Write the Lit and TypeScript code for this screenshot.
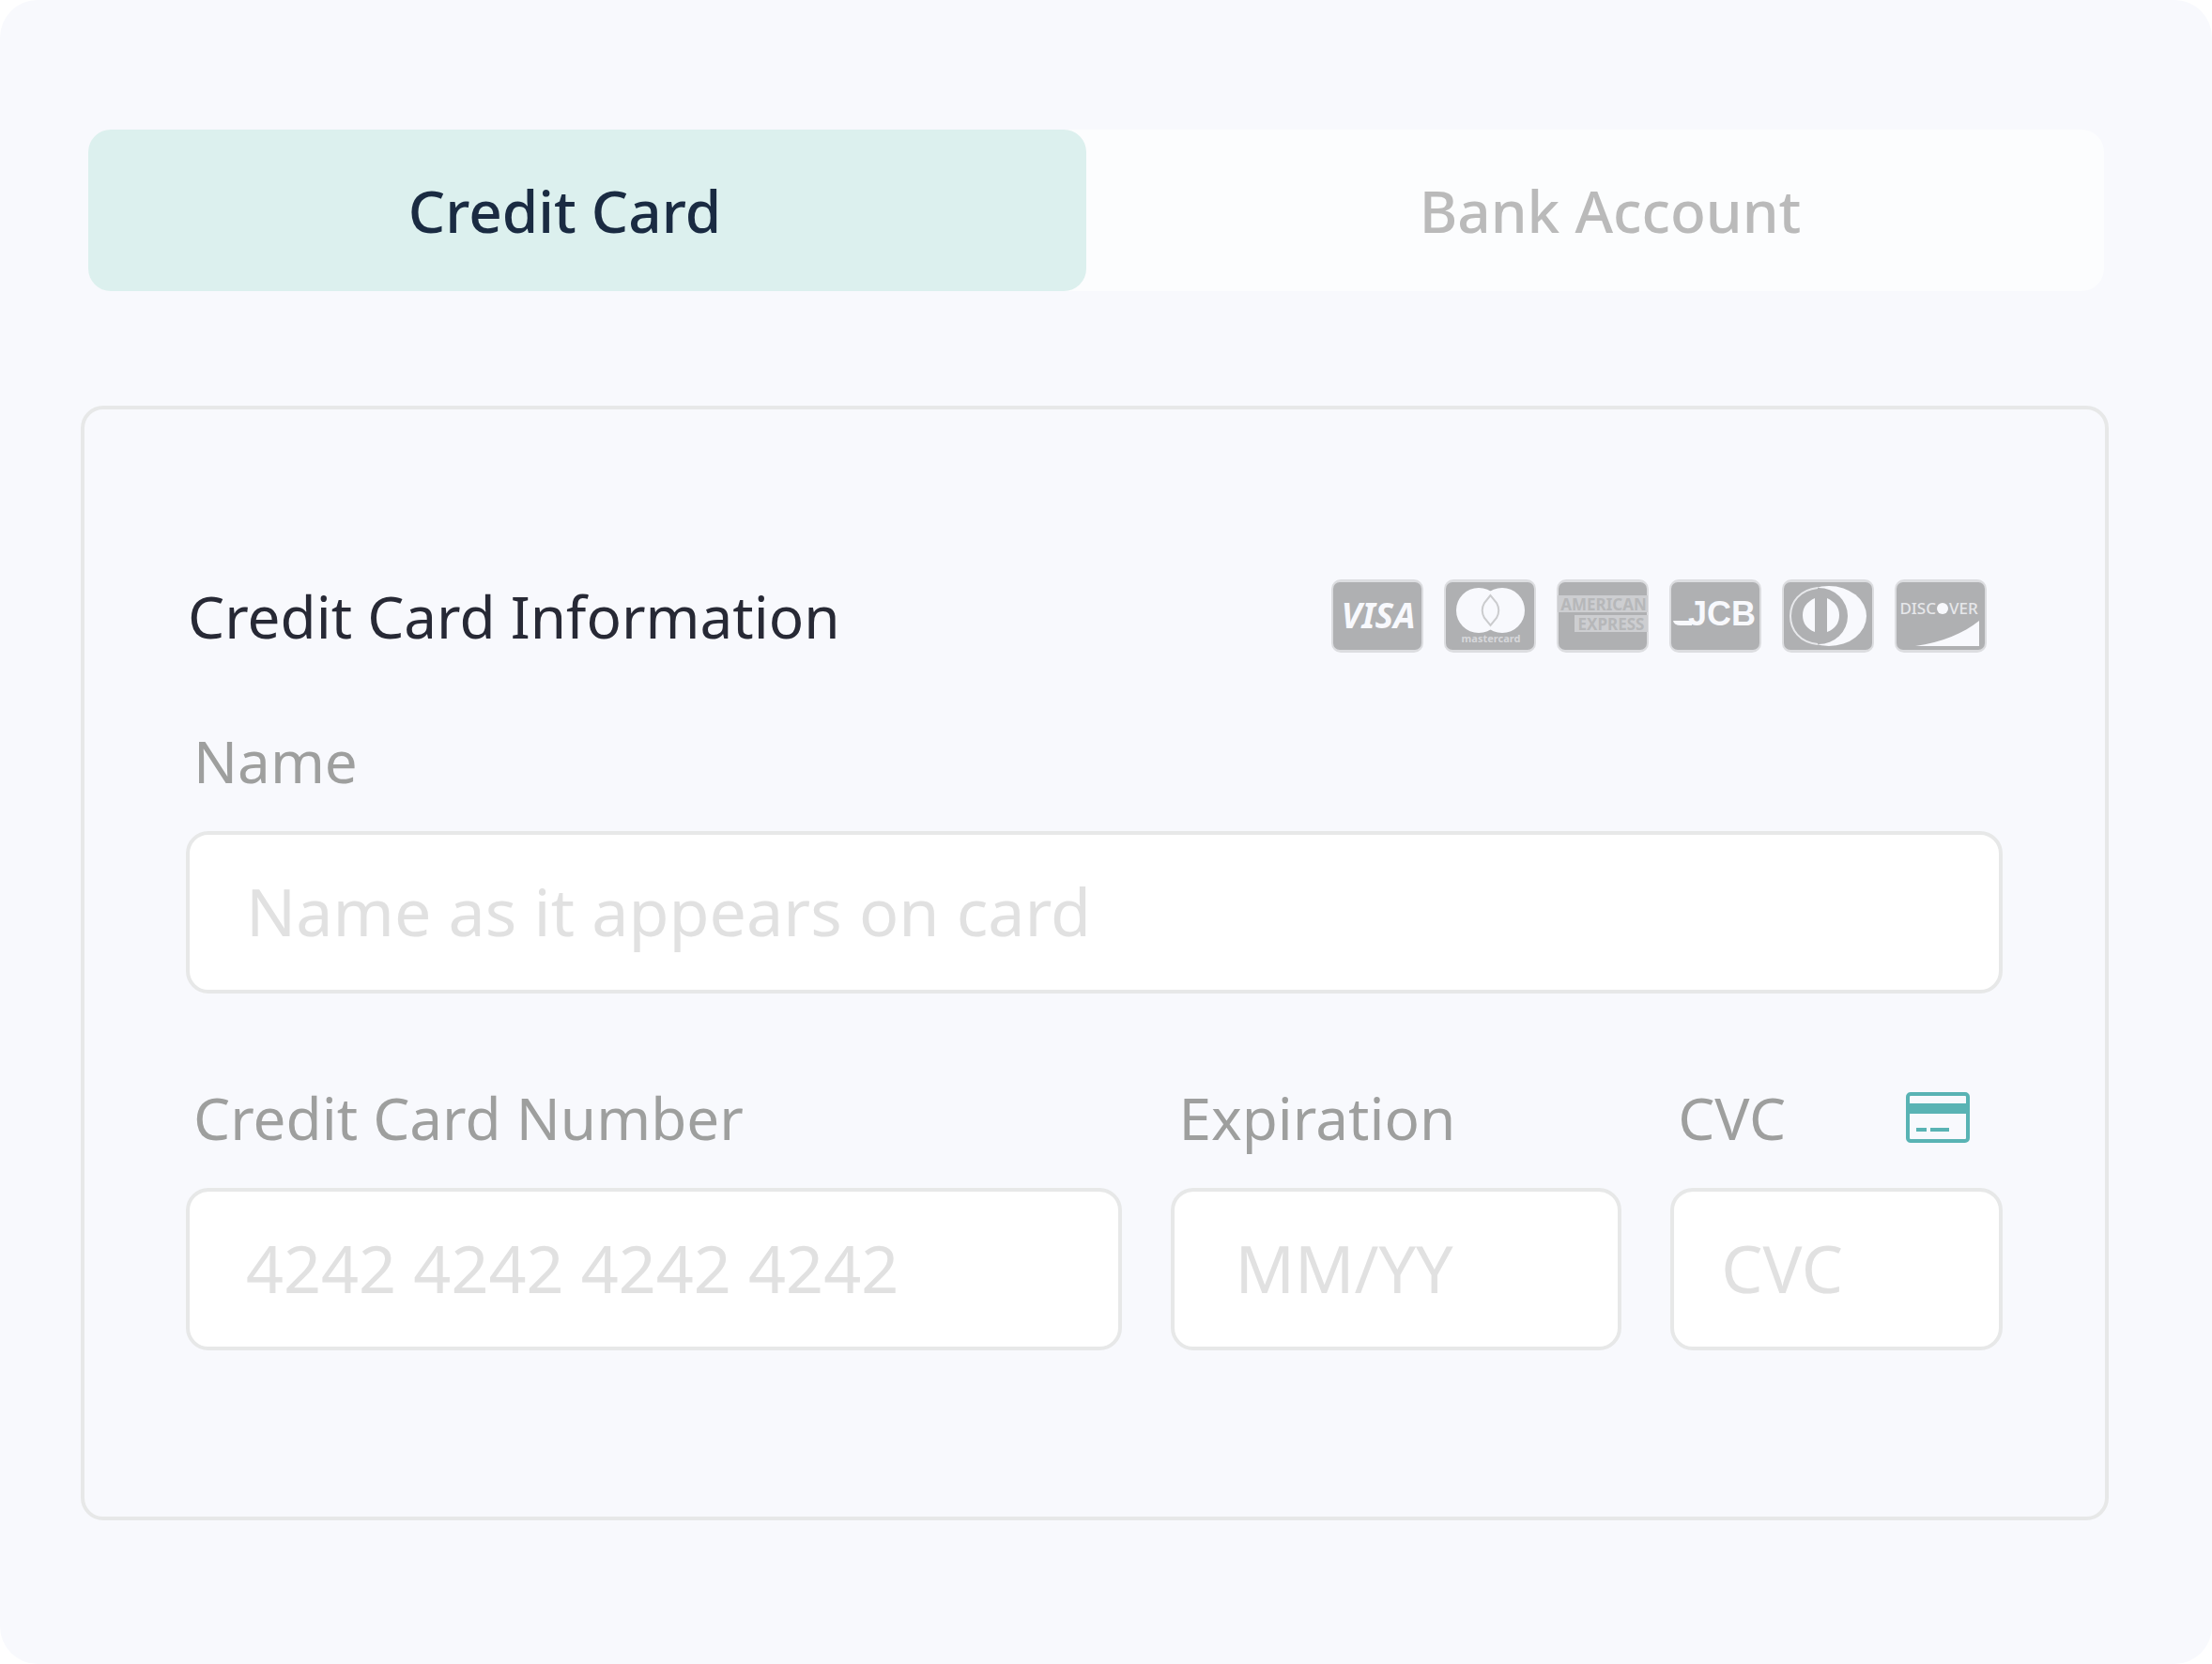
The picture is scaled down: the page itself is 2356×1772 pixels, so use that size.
import { LitElement, html, svg, css } from "lit";
import { customElement, property, state } from "lit/decorators.js";

const brandArt: Record<string, unknown> = {
  Visa: svg`<text class="visa" x="50" y="53">VISA</text>`,
  Mastercard: svg`
    <circle class="light" cx="37" cy="34" r="24" />
    <circle class="light" cx="62" cy="34" r="24" />
    <path class="rim" d="M49.500 18 L43 26 Q38.500 34 43 42 L49.500 50 L56 42 Q60.500 34 56 26Z" />
    <text class="mini" x="50" y="68">mastercard</text>`,
  "American Express": svg`
    <rect class="wash" x="1" y="18" width="96" height="18" />
    <rect class="wash" x="19" y="39" width="78" height="18" />
    <text class="amex" x="50" y="34">AMERICAN</text>
    <text class="amex" x="58" y="55">EXPRESS</text>`,
  JCB: svg`
    <text class="jcb" x="92" y="50">JCB</text>
    <path class="light" d="M4 45 H24 V50 H12 Q5 50 4 45Z" />`,
  "Diners Club": svg`
    <ellipse class="light" cx="50" cy="40" rx="40" ry="32" />
    <ellipse class="gray" cx="39" cy="40" rx="31" ry="30" />
    <path class="fine" d="M38 10 C19 12 9 25 9 40 C9 55 19 68 38 70" />
    <path class="light" d="M35 21 Q22 27 22 39 Q22 52 35 57Z M48 21 Q61 27 61 39 Q61 52 48 57Z" />`,
  Discover: svg`
    <text class="disc" x="44" y="38">DISC</text>
    <circle class="light" cx="51" cy="32" r="6" />
    <text class="ver" x="58" y="38">VER</text>
    <path class="light" d="M22 72 C50 68 74 58 90 45 V72Z" />`,
};

@customElement("card-brand")
class CardBrand extends LitElement {
  @property() name = "";

  static styles = css`
    :host { display: block; }
    .art { display: block; width: 98px; height: 80px; }
    .halo { fill: #dcdde0; }
    .gray { fill: #afb0b2; }
    .light { fill: #f8f9fd; }
    .wash { fill: #cdced1; }
    .rim { fill: none; stroke: #cbccce; stroke-width: 2; }
    .fine { fill: none; stroke: #e7e8eb; stroke-width: 2; }
    text { font-family: "Noto Sans", sans-serif; font-weight: 700; fill: #f8f9fd; }
    .visa { font-size: 37px; font-style: italic; text-anchor: middle; }
    .mini { font-size: 11px; fill: #d6d7da; text-anchor: middle; }
    .amex { font-size: 17px; fill: #b6b7b9; text-anchor: middle; }
    .jcb { font-family: "Liberation Sans", sans-serif; font-size: 36px; text-anchor: end; }
    .disc { font-size: 17px; font-weight: 500; fill: #e6e7ea; text-anchor: end; }
    .ver { font-size: 17px; font-weight: 500; fill: #e6e7ea; }
  `;

  render() {
    return html`
      <svg class="art" viewBox="0 0 98 80" role="img" aria-label=${this.name}>
        <rect class="halo" x="0" y="1" width="98" height="78" rx="10" />
        <rect class="gray" x="2" y="4" width="94" height="72" rx="7" />
        ${brandArt[this.name]}
      </svg>
    `;
  }
}

@customElement("app-root")
class AppRoot extends LitElement {
  @state() private tab = "Credit Card";

  static styles = css`
    :host {
      display: block;
      font-family: "Noto Sans", sans-serif;
    }
    * { box-sizing: border-box; }
    .page {
      display: flex;
      flex-direction: column;
      gap: 122px;
      min-height: 100vh;
      padding: 138px 110px 153px 86px;
      border-radius: 40px;
      background: #f8f9fd;
    }
    .tabs {
      display: grid;
      grid-template-columns: 1063fr 1084fr;
      margin: 0 5px 0 8px;
      border-radius: 24px;
      background: #fcfdfe;
    }
    .tab {
      height: 172px;
      border: 0;
      border-radius: 24px;
      background: none;
      color: #bababa;
      font: 500 62px/80px "Noto Sans", sans-serif;
      cursor: pointer;
    }
    .tab:first-child { padding: 0 48px 0 0; }
    .tab:last-child { padding: 0 0 0 32px; }
    .tab.active { background: #dcf0ee; color: #1a2b42; }
    .panel {
      display: flex;
      flex-direction: column;
      padding: 180px 109px 177px 108px;
      border: 4px solid #e7e8e8;
      border-radius: 24px;
    }
    .head {
      display: flex;
      align-items: center;
      justify-content: space-between;
      margin-bottom: 74px;
      padding: 0 17px 0 2px;
    }
    .title {
      margin: 0;
      color: #272935;
      font: 400 62px/80px "Noto Sans", sans-serif;
    }
    .brands { display: flex; gap: 22px; margin: 0; padding: 0; list-style: none; }
    .fields {
      display: grid;
      grid-template-columns: 998fr 480fr 354fr;
      gap: 92px 52px;
    }
    .field { display: flex; flex-direction: column; gap: 35px; min-width: 0; }
    .wide { grid-column: 1 / -1; }
    .caption {
      display: flex;
      align-items: center;
      justify-content: space-between;
      padding: 0 35px 0 8px;
      color: #9e9f9e;
      font-size: 62px;
      line-height: 80px;
    }
    .box {
      width: 100%;
      height: 173px;
      padding: 0 60px 4px;
      border: 4px solid #e7e8e8;
      border-radius: 24px;
      outline: none;
      background: #fff;
      color: #272935;
      font: 400 70px/92px "Noto Sans", sans-serif;
    }
    .box:focus-visible { border-color: #59b3b4; }
    .box::placeholder { color: #e1e1e1; opacity: 1; }
    .box.expiry { padding: 0 64px 4px; }
    .box.code { padding: 0 50px 4px; }
    .hint { display: block; width: 68px; height: 54px; }
    .frame { fill: none; stroke: #59b3b4; stroke-width: 4; }
    .ink { fill: #59b3b4; }
  `;

  private renderTab(name: string) {
    const on = this.tab === name;
    return html`<button
      class="tab ${on ? "active" : ""}"
      role="tab"
      aria-selected=${on ? "true" : "false"}
      @click=${() => (this.tab = name)}
    >${name}</button>`;
  }

  render() {
    return html`
      <main class="page">
        <div class="tabs" role="tablist">
          ${this.renderTab("Credit Card")}${this.renderTab("Bank Account")}
        </div>
        <form class="panel">
          <div class="head">
            <h1 class="title">Credit Card Information</h1>
            <ul class="brands">
              ${Object.keys(brandArt).map(
                (name) => html`<li><card-brand name=${name}></card-brand></li>`
              )}
            </ul>
          </div>
          <div class="fields">
            <div class="field wide">
              <label class="caption" for="name">Name</label>
              <input class="box" id="name" autocomplete="cc-name" placeholder="Name as it appears on card" />
            </div>
            <div class="field">
              <label class="caption" for="number">Credit Card Number</label>
              <input class="box" id="number" inputmode="numeric" autocomplete="cc-number" placeholder="4242 4242 4242 4242" />
            </div>
            <div class="field">
              <label class="caption" for="expiry">Expiration</label>
              <input class="box expiry" id="expiry" autocomplete="cc-exp" placeholder="MM/YY" />
            </div>
            <div class="field">
              <label class="caption" for="code">
                CVC
                <svg class="hint" viewBox="0 0 68 54" aria-hidden="true">
                  <rect class="frame" x="2" y="2" width="64" height="50" rx="3" />
                  <rect class="ink" x="2" y="12" width="64" height="11" />
                  <rect class="ink" x="11" y="38" width="11" height="4" />
                  <rect class="ink" x="26" y="38" width="20" height="4" />
                </svg>
              </label>
              <input class="box code" id="code" inputmode="numeric" autocomplete="cc-csc" placeholder="CVC" />
            </div>
          </div>
        </form>
      </main>
    `;
  }
}
